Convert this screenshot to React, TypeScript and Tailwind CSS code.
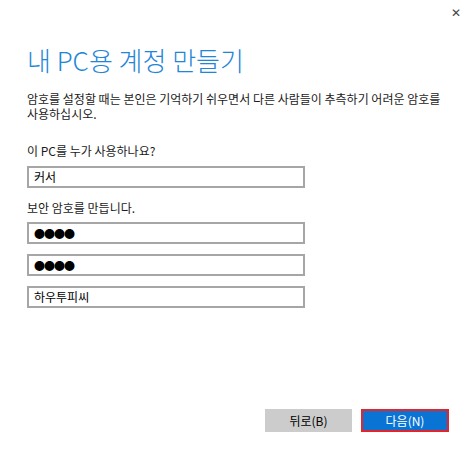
import React from "react";

function Field({ children }: { children: React.ReactNode }) {
  return (
    <div className="flex h-[22px] w-[278px] items-center border-2 border-[#a6a6a6] bg-white px-[5px] text-[12px] text-black">
      {children}
    </div>
  );
}

export default function App() {
  const font = { fontFamily: '"Noto Sans CJK KR", "Noto Sans", sans-serif' };

  return (
    <div className="relative h-[457px] w-[474px] bg-white" style={font}>
      <div className="absolute right-[13px] top-[6px] text-[12px] leading-none text-[#444]">✕</div>

      <div className="flex h-full flex-col px-[27px] pt-[43px]">
        <h1 className="text-[26px] font-light leading-[34px] text-[#1f86d8]">
          내 PC용 계정 만들기
        </h1>

        <p className="mt-[14px] text-[12px] leading-[15px] text-[#1a1a1a]">
          암호를 설정할 때는 본인은 기억하기 쉬우면서 다른 사람들이 추측하기 어려운 암호를
          사용하십시오.
        </p>

        <p className="mt-[22px] text-[12px] leading-[15px] text-[#1a1a1a]">이 PC를 누가 사용하나요?</p>
        <div className="mt-[8px]">
          <Field>커서</Field>
        </div>

        <p className="mt-[12px] text-[12px] leading-[15px] text-[#1a1a1a]">보안 암호를 만듭니다.</p>
        <div className="mt-[7px] flex flex-col gap-[10px]">
          <Field>
            <span className="text-[11px] tracking-[-1px]">●●●●</span>
          </Field>
          <Field>
            <span className="text-[11px] tracking-[-1px]">●●●●</span>
          </Field>
          <Field>하우투피씨</Field>
        </div>

        <div className="mt-auto mb-[25px] -mr-[2px] flex justify-end gap-[9px]">
          <button className="h-[23px] w-[87px] bg-[#cccccc] text-[12px] text-black">뒤로(B)</button>
          <button className="h-[23px] w-[88px] border-2 border-[#e3242b] bg-[#0a74d4] text-[12px] text-white">
            다음(N)
          </button>
        </div>
      </div>
    </div>
  );
}
